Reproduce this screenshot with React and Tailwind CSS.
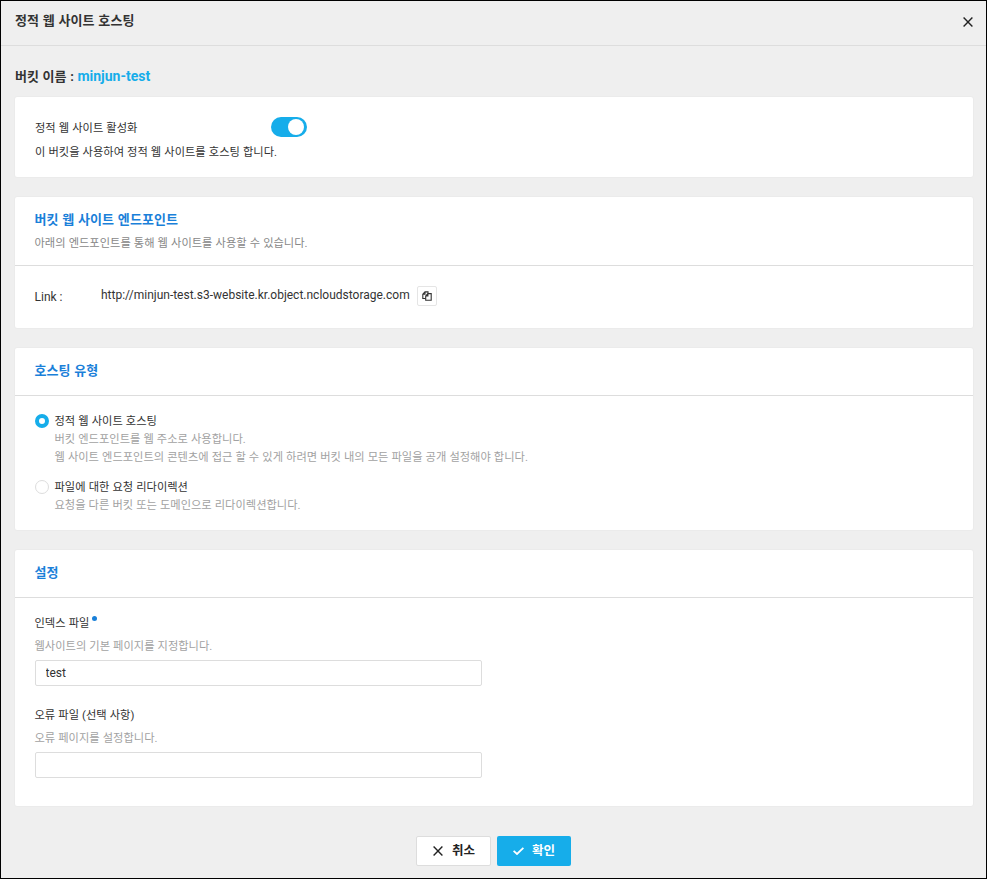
const CARD = 'rounded-[3px] border border-[#ebebeb] bg-white';
const HEADING = '-ml-[0.5px] text-[13px] leading-[18px] font-bold tracking-[0.08px] [word-spacing:0.4px] text-[#1a80d9]';
const LABEL = 'text-[11.25px] leading-[18px] [word-spacing:0.3px] text-[#333]';
const HINT = 'text-[11.25px] leading-[18px] [word-spacing:0.28px] text-[#a2a2a2]';

function CloseIcon({ className }) {
  return (
    <svg className={className} viewBox="0 0 10 10" fill="none" stroke="currentColor" strokeWidth="1.4">
      <path d="M0.6 0.6 9.4 9.4M9.4 0.6 0.6 9.4" />
    </svg>
  );
}

function CopyIcon() {
  return (
    <svg className="ml-px h-[10px] w-[10px]" viewBox="0 0 10 10" fill="none" stroke="currentColor" strokeWidth="1.1">
      <path d="M3.6 7.5H0.8V3.2L3 0.9H6V2.4M3 1V3.2H0.8" />
      <path d="M3.7 9.2V4.9L5.9 2.6H9.2V9.2ZM5.9 2.6V4.9H3.7" />
    </svg>
  );
}

function Field({ label, hint, value, required }) {
  return (
    <div>
      <div className={`-ml-[0.5px] flex ${LABEL}`}>
        {label}
        {required && <span className="mt-px ml-[3px] h-[5px] w-[5px] rounded-full bg-[#1a80d9]" />}
      </div>
      <p className={`mt-[5px] -ml-[0.5px] ${HINT}`}>{hint}</p>
      <input
        className="mt-[4px] block h-[26px] w-[447px] rounded-[2px] border border-[#ddd] bg-white px-[9.5px] text-[12px] text-[#333] outline-none"
        defaultValue={value}
      />
    </div>
  );
}

export default function App() {
  return (
    <div className="flex h-[879px] w-[987px] flex-col border border-black bg-[#efefef] font-['Roboto','Noto_Sans_CJK_KR',sans-serif] text-[#333]">
      <header className="flex h-[45px] shrink-0 items-start justify-between border-b border-[#ddd] pr-[13px] pl-[14px]">
        <h1 className="mt-[11px] text-[13px] leading-[18px] font-bold tracking-[0.08px] [word-spacing:0.4px]">정적 웹 사이트 호스팅</h1>
        <CloseIcon className="mt-[16px] h-[10px] w-[10px] text-[#222]" />
      </header>

      <main className="flex flex-col pr-[12px] pl-[13px]">
        <h2 className="mt-[21px] ml-[1px] h-[18px] text-[14px] leading-[18px] font-bold">
          <span className="text-[13px] tracking-[0.05px] [word-spacing:0.3px]">버킷 이름 :</span>{' '}
          <span className="text-[#16adea]">minjun-test</span>
        </h2>

        <section className={`mt-[11px] h-[82px] pt-[21px] pl-[20px] ${CARD}`}>
          <div className="flex">
            <span className={`mt-[2px] -mb-px w-[236px] ${LABEL}`}>정적 웹 사이트 활성화</span>
            <span className="-mt-px flex h-[20px] w-[36px] items-center justify-end rounded-full bg-[#16adea] pr-[3px]">
              <span className="h-[16px] w-[16px] rounded-full bg-white" />
            </span>
          </div>
          <p className={`mt-[7px] ${LABEL}`}>이 버킷을 사용하여 정적 웹 사이트를 호스팅 합니다.</p>
        </section>

        <section className={`mt-[18px] h-[133px] ${CARD}`}>
          <div className="h-[69px] border-b border-[#ddd] pt-[14px] pl-[20px]">
            <h3 className={HEADING}>버킷 웹 사이트 엔드포인트</h3>
            <p className="mt-[6px] -ml-[0.5px] text-[11.25px] leading-[18px] [word-spacing:0.3px] text-[#888]">
              아래의 엔드포인트를 통해 웹 사이트를 사용할 수 있습니다.
            </p>
          </div>
          <div className="flex pt-[20px] pl-[19.5px]">
            <span className="mt-[2px] w-[66.5px] text-[12px] leading-[18px]">Link :</span>
            <span className="text-[12px] leading-[18px]">http://minjun-test.s3-website.kr.object.ncloudstorage.com</span>
            <button className="ml-[7px] flex h-[20px] w-[20px] items-center justify-center rounded-[2px] border border-[#e5e5e5]">
              <CopyIcon />
            </button>
          </div>
        </section>

        <section className={`mt-[18px] h-[184px] ${CARD}`}>
          <div className="h-[48px] border-b border-[#ddd] pt-[14px] pl-[20px]">
            <h3 className={HEADING}>호스팅 유형</h3>
          </div>
          <div className="flex flex-col gap-[12px] pt-[17px] pl-[20px]">
            <div className="flex gap-[5.5px]">
              <span className="mt-px h-[14px] w-[14px] rounded-full border-[4px] border-[#16adea] bg-white" />
              <div>
                <p className={LABEL}>정적 웹 사이트 호스팅</p>
                <p className={HINT}>버킷 엔드포인트를 웹 주소로 사용합니다.</p>
                <p className={HINT}>웹 사이트 엔드포인트의 콘텐츠에 접근 할 수 있게 하려면 버킷 내의 모든 파일을 공개 설정해야 합니다.</p>
              </div>
            </div>
            <div className="flex gap-[5.5px]">
              <span className="mt-px h-[14px] w-[14px] rounded-full border border-[#ddd] bg-white" />
              <div>
                <p className={LABEL}>파일에 대한 요청 리다이렉션</p>
                <p className={HINT}>요청을 다른 버킷 또는 도메인으로 리다이렉션합니다.</p>
              </div>
            </div>
          </div>
        </section>

        <section className={`mt-[18px] h-[258px] ${CARD}`}>
          <div className="h-[48px] border-b border-[#ddd] pt-[14px] pl-[20px]">
            <h3 className={HEADING}>설정</h3>
          </div>
          <div className="flex flex-col gap-[20px] pt-[17px] pl-[20px]">
            <Field label="인덱스 파일" hint="웹사이트의 기본 페이지를 지정합니다." value="test" required />
            <div className="mt-px">
              <Field label="오류 파일 (선택 사항)" hint="오류 페이지를 설정합니다." value="" />
            </div>
          </div>
        </section>
      </main>

      <footer className="mt-[29px] flex justify-center gap-[6px] text-[13px] font-bold">
        <button className="flex h-[30px] w-[75px] items-center rounded-[2px] border border-[#ddd] bg-white pl-[16px] text-[#222]">
          <CloseIcon className="mr-[9px] h-[10px] w-[10px]" />
          <span className="pt-px text-[12.5px] tracking-[-0.1px]">취소</span>
        </button>
        <button className="flex h-[30px] w-[74px] items-center rounded-[2px] bg-[#16adea] pl-[16px] text-white">
          <svg className="mr-[8px] h-[8px] w-[11px]" viewBox="0 0 11 8" fill="none" stroke="currentColor" strokeWidth="1.8">
            <path d="M0.6 3.8 4 7 10.4 0.8" />
          </svg>
          <span className="pt-px text-[12.5px] tracking-[-0.1px]">확인</span>
        </button>
      </footer>
    </div>
  );
}
